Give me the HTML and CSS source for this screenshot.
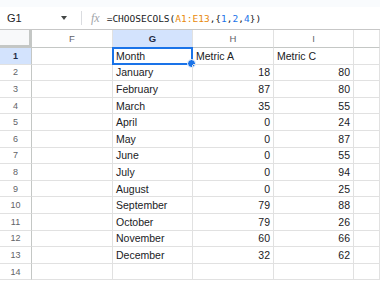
FILE: index.html
```html
<!DOCTYPE html>
<html lang="en">
<head>
  <meta charset="UTF-8" />
  <title>Sheet - CHOOSECOLS</title>
  <link rel="stylesheet" href="styles.css">
</head>
<body>

<div class="top-strip"></div>

<!-- Formula bar -->
<div class="formula-bar">
  <div class="name-box">
    <span class="name">G1</span>
    <span class="caret"></span>
  </div>
  <div class="divider"></div>
  <span class="fx">fx</span>
  <span class="formula">=CHOOSECOLS(<span class="ref">A1:E13</span>,{<span class="num">1</span>,<span class="num">2</span>,<span class="num">4</span>})</span>
</div>

<!-- Grid -->
<div class="sheet" id="sheet">
  <div class="corner"></div>
  <div class="col-head">F</div>
  <div class="col-head selected">G</div>
  <div class="col-head">H</div>
  <div class="col-head">I</div>
  <div class="col-head"></div>
</div>

<script>
  const rows = [
    ["Month", "Metric A", "Metric C"],
    ["January", 18, 80],
    ["February", 87, 80],
    ["March", 35, 55],
    ["April", 0, 24],
    ["May", 0, 87],
    ["June", 0, 55],
    ["July", 0, 94],
    ["August", 0, 25],
    ["September", 79, 88],
    ["October", 79, 26],
    ["November", 60, 66],
    ["December", 32, 62],
    ["", "", ""]
  ];

  const sheet = document.getElementById('sheet');

  function cell(cls, text) {
    const div = document.createElement('div');
    div.className = cls;
    div.textContent = text;
    sheet.appendChild(div);
    return div;
  }

  rows.forEach(function (row, i) {
    cell(i === 0 ? 'row-head selected' : 'row-head', i + 1);
    cell('cell', '');
    const first = cell('cell', row[0]);
    if (i === 0) {
      const sel = document.createElement('div');
      sel.className = 'selection';
      sel.innerHTML = '<span class="handle"></span>';
      first.appendChild(sel);
    }
    cell(typeof row[1] === 'number' ? 'cell num' : 'cell', row[1]);
    cell(typeof row[2] === 'number' ? 'cell num' : 'cell', row[2]);
    cell('cell', '');
  });
</script>

</body>
</html>
```

FILE: styles.css
```css
html, body {
  margin: 0;
  padding: 0;
  background-color: #ffffff;
  font-family: 'Liberation Sans', Arial, sans-serif;
  overflow: hidden;
}

.top-strip {
  height: 7px;
  background-color: #f9fbfd;
}

.formula-bar {
  height: 22px;
  display: flex;
  align-items: center;
  border-bottom: 1px solid #c7c7c7;
}

.name-box {
  width: 74px;
  display: flex;
  align-items: center;
  justify-content: space-between;
  padding-left: 7px;
  padding-right: 7px;
  box-sizing: border-box;
}

.name {
  font-size: 11px;
  color: #202124;
}

.caret {
  width: 0;
  height: 0;
  border-left: 3.5px solid transparent;
  border-right: 3.5px solid transparent;
  border-top: 4px solid #444746;
}

.divider {
  width: 1px;
  height: 14px;
  background-color: #dadce0;
  margin-left: 7px;
}

.fx {
  font-family: 'Liberation Serif', serif;
  font-style: italic;
  font-size: 12px;
  color: #a0a4a8;
  margin-left: 9px;
  margin-right: 7px;
}

.formula {
  font-family: 'DejaVu Sans Mono', monospace;
  font-size: 9.5px;
  color: #202124;
}

.formula .ref { color: #e8880a; }
.formula .num { color: #1a73e8; }

.sheet {
  display: grid;
  grid-template-columns: 32px 81px 80px 81px 80px 1fr;
  grid-template-rows: 18px repeat(14, 16.6px);
  font-size: 10.5px;
  color: #202124;
}

.corner {
  background-color: #f8f9fa;
  border-right: 3px solid #c4c7c5;
  border-bottom: 3px solid #c4c7c5;
}

.col-head {
  display: flex;
  align-items: center;
  justify-content: center;
  font-size: 9.5px;
  color: #5f6368;
  border-right: 1px solid #e1e1e1;
  border-bottom: 1px solid #c4c7c5;
}

.row-head {
  display: flex;
  align-items: center;
  justify-content: center;
  font-size: 9px;
  color: #5f6368;
  border-right: 1px solid #c4c7c5;
  border-bottom: 1px solid #e1e1e1;
}

.col-head.selected,
.row-head.selected {
  background-color: #d3e3fd;
  color: #1f2a44;
  font-weight: bold;
}

.cell {
  position: relative;
  display: flex;
  align-items: center;
  padding: 0 3px;
  border-right: 1px solid #e1e1e1;
  border-bottom: 1px solid #e1e1e1;
  white-space: nowrap;
}

.cell.num {
  justify-content: flex-end;
}

.selection {
  position: absolute;
  left: -1px;
  top: -1px;
  right: -1px;
  bottom: -1px;
  border: 2px solid #1a73e8;
  pointer-events: none;
}

.handle {
  position: absolute;
  right: -5px;
  bottom: -5px;
  width: 7px;
  height: 7px;
  border-radius: 50%;
  background-color: #1a73e8;
  border: 1px solid #ffffff;
}
```
